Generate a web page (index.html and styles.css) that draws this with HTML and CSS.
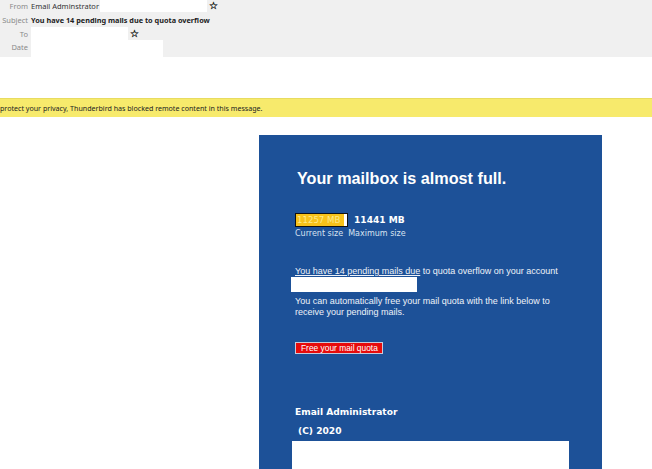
FILE: index.html
```html
<!DOCTYPE html>
<html>
<head>
<meta charset="utf-8">
<link rel="stylesheet" href="styles.css">
</head>
<body>
<div class="header">
  <div class="row r-from">
    <span class="label">From</span>
    <span class="value">Email Adminstrator</span>
    <span class="blank b-from"></span>
    <span class="star">☆</span>
  </div>
  <div class="row r-subject">
    <span class="label">Subject</span>
    <span class="value subject">You have 14 pending mails due to quota overflow</span>
  </div>
  <div class="row r-to">
    <span class="label">To</span>
    <span class="blank b-to"></span>
    <span class="star">☆</span>
  </div>
  <div class="row r-date">
    <span class="label">Date</span>
    <span class="blank b-date"></span>
  </div>
</div>
<div class="gap"></div>
<div class="notice">protect your privacy, Thunderbird has blocked remote content in this message.</div>
<div class="content">
  <div class="card">
    <h1 class="title">Your mailbox is almost full.</h1>
    <div class="sizes">
      <span class="current"><span class="fill">11257 MB</span></span>
      <span class="max">11441 MB</span>
    </div>
    <div class="size-labels">Current size&nbsp;&nbsp;Maximum size</div>
    <p class="pending"><span class="link">You have 14 pending mails due</span> to quota overflow on your account</p>
    <div class="account"></div>
    <p class="info">You can automatically free your mail quota with the link below to receive your pending mails.</p>
    <span class="btn">Free your mail quota</span>
    <div class="admin">Email Administrator</div>
    <div class="copy">(C) 2020</div>
    <div class="footer-box"></div>
  </div>
</div>
</body>
</html>
```
FILE: styles.css
```css
html, body {
  margin: 0;
  padding: 0;
  background: #ffffff;
  overflow: hidden;
}
body {
  width: 652px;
  height: 469px;
  font-family: "Noto Sans", "DejaVu Sans", sans-serif;
}
.header {
  background: #f0f0f0;
  height: 57px;
  font-size: 7.5px;
  color: #333;
}
.row {
  display: flex;
  align-items: center;
}
.r-from { height: 12px; }
.r-subject { height: 15px; }
.r-to { height: 13px; }
.r-date { height: 17px; align-items: stretch; }
.label {
  width: 28px;
  text-align: right;
  color: #8a8a8a;
  margin-right: 3px;
  line-height: 12px;
}
.r-date .label { line-height: 14px; }
.value { white-space: nowrap; }
.subject { font-weight: bold; color: #222; font-size: 7.3px; }
.blank { background: #fff; align-self: stretch; }
.b-from { width: 107px; margin-left: 1px; }
.b-to { width: 97px; }
.b-date { width: 132px; }
.star {
  font-family: "DejaVu Sans", sans-serif;
  font-size: 10px;
  color: #222;
  margin-left: 2px;
  line-height: 10px;
  -webkit-text-stroke: 0.3px #222;
}
.gap { height: 41px; }
.notice {
  background: #f7ea6c;
  border-top: 1px solid #e8dc60;
  height: 18px;
  line-height: 18px;
  font-size: 7.1px;
  color: #222;
  white-space: nowrap;
}
.content {
  padding: 18px 0 0 259px;
}
.card {
  width: 343px;
  height: 340px;
  background: #1d5198;
  box-sizing: border-box;
  padding: 33px 0 0 36px;
  color: #fff;
  font-family: "Liberation Sans", Arial, sans-serif;
}
.title {
  margin: 0 0 0 2px;
  font-size: 16.2px;
  font-weight: bold;
  line-height: 20px;
}
.sizes {
  margin-top: 25px;
  display: flex;
  align-items: center;
  height: 14px;
}
.current {
  display: inline-block;
  width: 51px;
  height: 12px;
  border: 1px solid #111;
  background: #fff;
  box-sizing: content-box;
}
.fill {
  display: block;
  width: 47px;
  height: 12px;
  background: #f7c21a;
  color: #fde98a;
  font-family: "DejaVu Sans", sans-serif;
  font-size: 8.6px;
  line-height: 12px;
  padding-left: 1px;
}
.max {
  margin-left: 6px;
  font-family: "DejaVu Sans", sans-serif;
  font-weight: bold;
  font-size: 9.1px;
}
.size-labels {
  font-family: "DejaVu Sans", sans-serif;
  font-size: 8px;
  color: #d8e2f0;
  margin-top: 2px;
}
.pending {
  margin: 27px 0 0 0;
  font-size: 9px;
  line-height: 12px;
  color: #eef2f8;
}
.link { text-decoration: underline; }
.account {
  background: #fff;
  width: 126px;
  height: 15px;
  margin-left: -4px;
}
.info {
  margin: 4px 0 0 0;
  font-size: 9px;
  line-height: 11px;
  color: #eef2f8;
  width: 262px;
}
.btn {
  display: inline-block;
  margin-top: 24px;
  background: #e80b0b;
  border: 1px solid #c9c9d9;
  font-size: 8.4px;
  line-height: 10px;
  padding: 0 4px 0 5px;
  color: #fff;
}
.admin {
  margin-top: 52px;
  font-family: "DejaVu Sans", sans-serif;
  font-weight: bold;
  font-size: 9.1px;
}
.copy {
  margin-top: 9px;
  margin-left: 3px;
  font-family: "DejaVu Sans", sans-serif;
  font-weight: bold;
  font-size: 9.1px;
}
.footer-box {
  margin-top: 5px;
  margin-left: -3px;
  width: 277px;
  height: 40px;
  background: #fff;
}
```
